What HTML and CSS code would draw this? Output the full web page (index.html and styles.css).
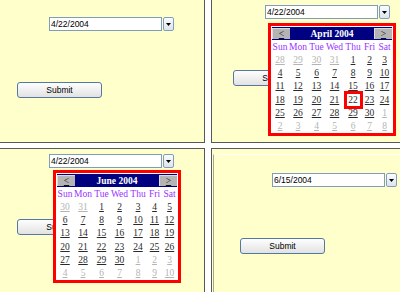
FILE: index.html
```html
<html>
    <head>
        <title>Date Picker States</title>
        <link rel="stylesheet" href="styles.css">
    </head>
    <body>
        <div class="board">
            <!-- closed picker -->
            <div class="cell cell-tl">
                <div class="form">
                    <div class="field">
                        <input type="text" class="date-box" value="4/22/2004" />
                        <button class="drop"><svg width="5" height="3" viewBox="0 0 5 3"><path d="M0 0h5L2.5 3z" fill="#000"/></svg></button>
                    </div>
                    <button class="submit">Submit</button>
                </div>
            </div>

            <!-- open picker, april -->
            <div class="cell cell-tr">
                <div class="form">
                    <div class="field">
                        <input type="text" class="date-box" value="4/22/2004" />
                        <button class="drop"><svg width="5" height="3" viewBox="0 0 5 3"><path d="M0 0h5L2.5 3z" fill="#000"/></svg></button>
                        <div class="cal">
                            <div class="cal-head">
                                <a class="nav" href="#">&lt;</a>
                                <span class="title">April 2004</span>
                                <a class="nav" href="#">&gt;</a>
                            </div>
                            <div class="cal-grid">
                                <span class="dow">Sun</span><span class="dow">Mon</span><span class="dow">Tue</span><span class="dow">Wed</span><span class="dow">Thu</span><span class="dow">Fri</span><span class="dow">Sat</span>
                                <a class="day other" href="#">28</a><a class="day other" href="#">29</a><a class="day other" href="#">30</a><a class="day other" href="#">31</a><a class="day" href="#">1</a><a class="day" href="#">2</a><a class="day" href="#">3</a>
                                <a class="day" href="#">4</a><a class="day" href="#">5</a><a class="day" href="#">6</a><a class="day" href="#">7</a><a class="day" href="#">8</a><a class="day" href="#">9</a><a class="day" href="#">10</a>
                                <a class="day" href="#">11</a><a class="day" href="#">12</a><a class="day" href="#">13</a><a class="day" href="#">14</a><a class="day" href="#">15</a><a class="day" href="#">16</a><a class="day" href="#">17</a>
                                <a class="day" href="#">18</a><a class="day" href="#">19</a><a class="day" href="#">20</a><a class="day" href="#">21</a><a class="day" href="#"><span class="sel">22</span></a><a class="day" href="#">23</a><a class="day" href="#">24</a>
                                <a class="day" href="#">25</a><a class="day" href="#">26</a><a class="day" href="#">27</a><a class="day" href="#">28</a><a class="day" href="#">29</a><a class="day" href="#">30</a><a class="day other" href="#">1</a>
                                <a class="day other" href="#">2</a><a class="day other" href="#">3</a><a class="day other" href="#">4</a><a class="day other" href="#">5</a><a class="day other" href="#">6</a><a class="day other" href="#">7</a><a class="day other" href="#">8</a>
                            </div>
                        </div>
                    </div>
                    <button class="submit">Submit</button>
                </div>
            </div>

            <!-- open picker, june -->
            <div class="cell cell-bl">
                <div class="form">
                    <div class="field">
                        <input type="text" class="date-box" value="4/22/2004" />
                        <button class="drop"><svg width="5" height="3" viewBox="0 0 5 3"><path d="M0 0h5L2.5 3z" fill="#000"/></svg></button>
                        <div class="cal cal-low">
                            <div class="cal-head">
                                <a class="nav" href="#">&lt;</a>
                                <span class="title">June 2004</span>
                                <a class="nav" href="#">&gt;</a>
                            </div>
                            <div class="cal-grid">
                                <span class="dow">Sun</span><span class="dow">Mon</span><span class="dow">Tue</span><span class="dow">Wed</span><span class="dow">Thu</span><span class="dow">Fri</span><span class="dow">Sat</span>
                                <a class="day other" href="#">30</a><a class="day other" href="#">31</a><a class="day" href="#">1</a><a class="day" href="#">2</a><a class="day" href="#">3</a><a class="day" href="#">4</a><a class="day" href="#">5</a>
                                <a class="day" href="#">6</a><a class="day" href="#">7</a><a class="day" href="#">8</a><a class="day" href="#">9</a><a class="day" href="#">10</a><a class="day" href="#">11</a><a class="day" href="#">12</a>
                                <a class="day" href="#">13</a><a class="day" href="#">14</a><a class="day" href="#">15</a><a class="day" href="#">16</a><a class="day" href="#">17</a><a class="day" href="#">18</a><a class="day" href="#">19</a>
                                <a class="day" href="#">20</a><a class="day" href="#">21</a><a class="day" href="#">22</a><a class="day" href="#">23</a><a class="day" href="#">24</a><a class="day" href="#">25</a><a class="day" href="#">26</a>
                                <a class="day" href="#">27</a><a class="day" href="#">28</a><a class="day" href="#">29</a><a class="day" href="#">30</a><a class="day other" href="#">1</a><a class="day other" href="#">2</a><a class="day other" href="#">3</a>
                                <a class="day other" href="#">4</a><a class="day other" href="#">5</a><a class="day other" href="#">6</a><a class="day other" href="#">7</a><a class="day other" href="#">8</a><a class="day other" href="#">9</a><a class="day other" href="#">10</a>
                            </div>
                        </div>
                    </div>
                    <button class="submit">Submit</button>
                </div>
            </div>

            <!-- picked date -->
            <div class="cell cell-br">
                <div class="frame">
                    <div class="form">
                        <div class="field">
                            <input type="text" class="date-box" value="6/15/2004" />
                            <button class="drop"><svg width="5" height="3" viewBox="0 0 5 3"><path d="M0 0h5L2.5 3z" fill="#000"/></svg></button>
                        </div>
                        <button class="submit">Submit</button>
                    </div>
                </div>
            </div>
        </div>
    </body>
</html>
```

FILE: styles.css
```css
body{
    margin: 0;
    background: #fff;
    overflow: hidden;
    font-family: "Liberation Sans", Arial, sans-serif;
}
.board{
    display: grid;
    grid-template-columns: 215px 195px;
    grid-template-rows: 153px 150px;
    column-gap: 6px;
    row-gap: 5px;
    margin: -10px 0 0 -10px;
}
.cell{
    background: #ffffcc;
    border: 1px solid #585858;
}
.cell-tl{
    padding: 26px 0 0 26px;
}
.cell-tr{
    padding: 14px 0 0 21px;
}
.cell-bl{
    padding: 5px 0 0 26px;
}
.cell-br{
    padding: 5px 0 0 1px;
    display: flex;
}
.frame{
    flex: 1;
    border-top: 1px solid #fff;
    border-left: 1px solid #a8a89a;
    padding: 18px 0 0 26px;
}

.form{
    display: flex;
    flex-direction: column;
    align-items: flex-start;
}
.field{
    position: relative;
    display: flex;
    height: 14px;
    margin-left: 32px;
}
.date-box{
    box-sizing: border-box;
    width: 113px;
    height: 14px;
    margin: 0;
    padding: 0 0 0 1px;
    border: 1px solid #7f9db9;
    background: #fff;
    color: #000;
    font: 8.5px "Liberation Sans", Arial, sans-serif;
    outline: none;
}
.drop{
    box-sizing: border-box;
    width: 11px;
    height: 14px;
    margin: 0 0 0 1px;
    padding: 0;
    border: 1px solid #7f9dbf;
    border-radius: 2px;
    background: linear-gradient(#fbfcfe, #dde4ee);
    display: flex;
    align-items: center;
    justify-content: center;
}
.submit{
    box-sizing: border-box;
    width: 85px;
    height: 16px;
    margin-top: 51px;
    padding: 0;
    border: 1px solid #56779f;
    border-radius: 3px;
    background: linear-gradient(#fefefe, #e2e2e2);
    color: #000;
    font: 8.5px "Liberation Sans", Arial, sans-serif;
}

/* popup calendar */
.cal{
    position: absolute;
    left: 3px;
    top: 18px;
    z-index: 2;
    box-sizing: border-box;
    width: 128px;
    border: 3px solid #f00;
    padding: 1px 1px 0;
    background: #fff;
    font-family: "Liberation Serif", "Times New Roman", serif;
    font-size: 9.5px;
}
.cal-low{
    left: 4px;
    top: 16px;
}
.cal-head{
    display: flex;
    align-items: center;
    justify-content: space-between;
    height: 13px;
    background: #000080;
}
.nav{
    box-sizing: border-box;
    width: 18px;
    height: 11px;
    line-height: 10px;
    text-align: center;
    background: #b4b4b4;
    border-top: 1px solid #dcdcdc;
    border-left: 1px solid #dcdcdc;
    color: #111;
    text-decoration: underline;
}
.title{
    color: #fff;
    font-weight: bold;
}
.cal-grid{
    display: grid;
    grid-template-columns: 16px 20px 17px 19px 18px 15px 15px;
    grid-template-rows: 13px repeat(6, 13.33px);
    align-items: center;
    text-align: center;
}
.dow{
    color: #9933ff;
}
.day{
    color: #2a2a2a;
    text-decoration: underline;
}
.other{
    color: #b4b4b4;
}
.sel{
    display: inline-block;
    width: 13px;
    height: 12px;
    line-height: 12px;
    outline: 3px solid #f00;
}
```
